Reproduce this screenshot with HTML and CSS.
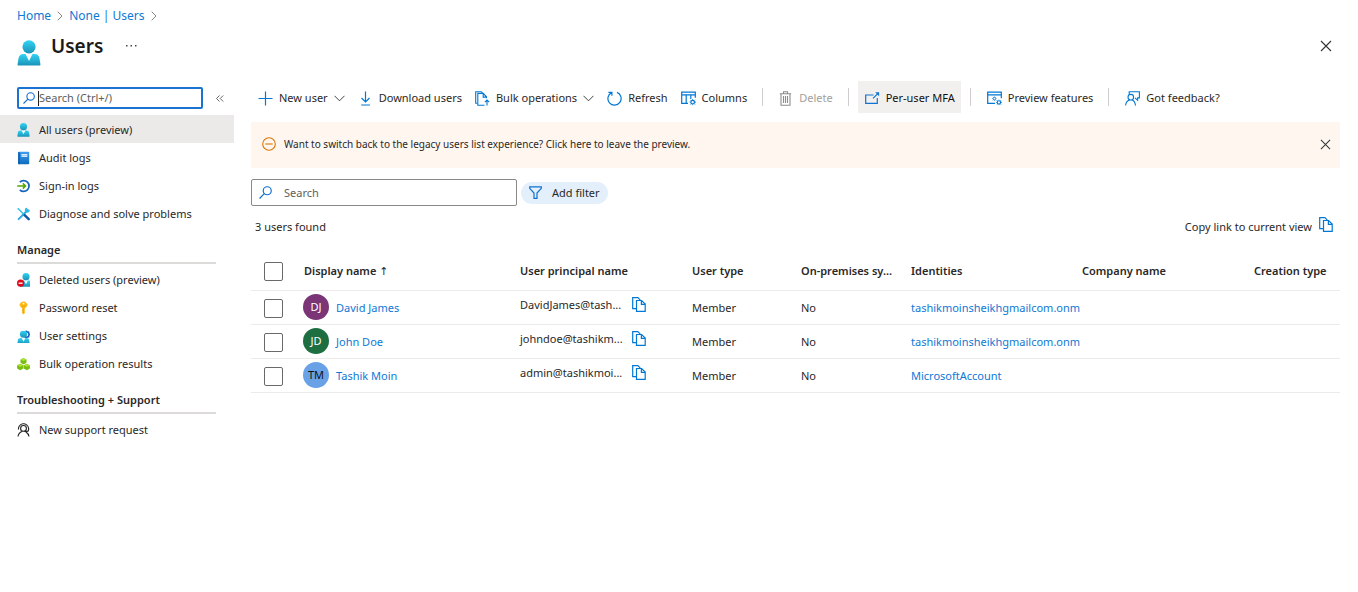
FILE: index.html
```html
<!DOCTYPE html>
<html lang="en">
<head>
<meta charset="utf-8">
<title>Users</title>
<meta name="viewport" content="width=device-width, initial-scale=1">
<link rel="stylesheet" href="styles.css">
</head>
<body>
<svg class="defs" aria-hidden="true">
  <defs>
    <linearGradient id="g-cyan" x1="0" y1="0" x2="0" y2="1"><stop offset="0" stop-color="#32d4f5"/><stop offset="1" stop-color="#1b93b8"/></linearGradient>
    <linearGradient id="g-book" x1="0" y1="0" x2="0" y2="1"><stop offset="0" stop-color="#3f9df0"/><stop offset="1" stop-color="#0f6cbd"/></linearGradient>
    <symbol id="person" viewBox="0 0 24 26">
      <path d="M1.500 25.500C.700 25.500.500 25 .600 24L1.500 18.500c.500-3 2-4.500 5-4.500h11c3 0 4.500 1.500 5 4.500l.9 5.500c.1 1-.1 1.500-.9 1.500z" fill="url(#g-cyan)"/>
      <path d="M8.500 14h7L12 21z" fill="#fff"/>
      <circle cx="12" cy="6.800" r="6.600" fill="url(#g-cyan)"/>
    </symbol>
    <symbol id="chev-right" viewBox="0 0 6 10"><path d="M.7.700 5 5 .7 9.300" fill="none" stroke="#8a8886"/></symbol>
    <symbol id="chev-down" viewBox="0 0 11 7"><path d="M.5.800 5.500 5.800 10.500.800" fill="none" stroke="#444"/></symbol>
    <symbol id="search" viewBox="0 0 12 12"><g fill="none" stroke="#0f6fd0" stroke-width="1.100"><circle cx="7.600" cy="4.400" r="3.700"/><path d="M4.900 7.100.5 11.500"/></g></symbol>
    <symbol id="close" viewBox="0 0 12 12"><path d="M1 1 11 11M11 1 1 11" fill="none" stroke="#333" stroke-width="1.100"/></symbol>
    <symbol id="copy" viewBox="0 0 14 15"><g fill="none" stroke="#0078d4" stroke-width="1.200"><path d="M4.300 11.600H.700V.700h5.200l2.400 2.400"/><path d="M4.500 3.500h5.100l3.600 3.600v7.200H4.500z"/><path d="M9.400 3.700v3.600h3.700"/></g></symbol>
    <symbol id="gear" viewBox="0 0 6 6"><circle cx="3" cy="3" r="1.600" fill="#fff" stroke="#0078d4" stroke-width="1.100"/><path d="M3 0v1M3 5v1M0 3h1M5 3h1M.9.900l.7.700M4.400 4.400l.7.700M.9 5.100l.7-.7M4.400 1.600l.7-.7" stroke="#0078d4" stroke-width=".8"/></symbol>
  </defs>
</svg>

<header class="page-head">
  <nav class="crumbs" aria-label="Breadcrumb">
    <a href="#">Home</a><svg class="crumb-sep"><use href="#chev-right"/></svg>
    <a href="#">None | Users</a><svg class="crumb-sep"><use href="#chev-right"/></svg>
  </nav>
  <div class="title-row">
    <svg class="title-icon"><use href="#person"/></svg>
    <h1>Users</h1>
    <button class="more" type="button" aria-label="More"><svg width="11" height="2" viewBox="0 0 11 2"><path d="M0 0h1.500v1.500H0zM4.500 0H6v1.500H4.500zM9 0h1.500v1.500H9z" fill="#444"/></svg></button>
    <button class="page-close" type="button" aria-label="Close"><svg width="12" height="12"><use href="#close"/></svg></button>
  </div>
</header>

<div class="layout">
  <aside class="sidebar">
    <div class="side-search">
      <label class="field field-focus">
        <svg width="12" height="12"><use href="#search"/></svg>
        <span class="caret"></span>
        <input type="text" placeholder="Search (Ctrl+/)" aria-label="Search menu">
      </label>
      <button class="collapse" type="button" aria-label="Collapse menu"><svg width="8" height="7" viewBox="0 0 8 7"><path d="M3.500.500.500 3.500l3 3M7.200.500l-3 3 3 3" fill="none" stroke="#555" stroke-width=".9"/></svg></button>
    </div>
    <nav>
      <ul class="menu">
        <li><a class="selected" href="#"><svg viewBox="0 0 24 26"><use href="#person"/></svg>All users (preview)</a></li>
        <li><a href="#"><svg viewBox="0 0 13 13"><rect x="1.200" y=".3" width="11" height="12.400" rx=".8" fill="url(#g-book)"/><path d="M1.200.800h1.600v11.900H1.900q-.7 0-.7-.8z" fill="#0b5cad"/><path d="M4.500 2.500h5.800v2.900H4.500z" fill="#e8f3fd"/><path d="M4.500 3.900h5.800" stroke="#6bb3ee" stroke-width=".6"/></svg>Audit logs</a></li>
        <li><a href="#"><svg viewBox="0 0 13 13"><path d="M2.800 2.700A5.400 5.400 0 1 1 2.800 10.300" fill="none" stroke="#1565c0" stroke-width="1.700"/><path d="M.3 6.500h8M5.800 3.900l2.700 2.600-2.700 2.600" fill="none" stroke="#57a300" stroke-width="1.500"/></svg>Sign-in logs</a></li>
        <li><a href="#"><svg viewBox="0 0 13 13"><path d="M1.600 11.700 10.800 2.500" stroke="#2aa9de" stroke-width="1.900" stroke-linecap="round"/><path d="M12.700 2.300a2.500 2.500 0 1 1-2.200-2.100L9.700 1.900l1.100 1.200z" fill="#2bb8e6"/><path d="M.7.700 8 8" stroke="#35c0ee" stroke-width="1.500"/><path d="M7.600 7.600 11.700 11.700" stroke="#0b5aa8" stroke-width="2.400" stroke-linecap="round"/></svg>Diagnose and solve problems</a></li>
      </ul>
      <h2>Manage</h2>
      <ul class="menu">
        <li><a href="#"><svg viewBox="0 0 13 14"><svg x="2.500" y="0" width="10.500" height="12"><use href="#person"/></svg><circle cx="3.600" cy="10.200" r="3.600" fill="#e00b1c"/><path d="M1.600 10.200h4" stroke="#fff" stroke-width="1.300"/></svg>Deleted users (preview)</a></li>
        <li><a href="#"><svg viewBox="0 0 13 14"><path d="M6.500.500Q8 .400 9.200 1.700L10.300 3q.5.700 0 1.500L9 6.500l-1.200.8v5l-1.300 1.200L5.200 12.300v-5L4 6.500 2.700 4.500q-.5-.8 0-1.500L3.800 1.700Q5 .500 6.500.500z" fill="#fdb913"/><circle cx="6.500" cy="2.600" r=".9" fill="#fff"/><path d="M4.700 5.200h3.600M6.100 7.500v4.500" stroke="#e59500" stroke-width=".7"/></svg>Password reset</a></li>
        <li><a href="#"><svg viewBox="0 0 13 13"><circle cx="9.300" cy="5" r="2.700" fill="none" stroke="#1565c0" stroke-width="1.400"/><path d="M9.300.9v1.400M9.300 7.700v1.400M11.900 5h1.100M11.200 3.100l1-1M11.200 6.900l1 1M7.400 3.100l-1-1" stroke="#1565c0" stroke-width="1.300"/><svg x="0" y="1" width="10" height="11"><use href="#person"/></svg></svg>User settings</a></li>
        <li><a href="#"><svg viewBox="0 0 13 13"><path d="M6.500.500 9.500 2v3.300L6.500 6.900 3.500 5.300V2zM3.200 6.200 6.300 7.800V11.100L3.200 12.700.1 11.100V7.800zM9.800 6.200 12.900 7.800V11.100L9.800 12.700 6.700 11.100V7.800z" fill="#78bd10"/><path d="M6.500.700 9.200 2.100 6.500 3.500 3.800 2.100zM3.200 6.400 6 7.900 3.200 9.300.4 7.900zM9.800 6.400 12.600 7.900 9.800 9.300 7 7.900z" fill="#aee632"/></svg>Bulk operation results</a></li>
      </ul>
      <h2>Troubleshooting + Support</h2>
      <ul class="menu">
        <li><a href="#"><svg viewBox="0 0 13 14"><g fill="none" stroke="#222" stroke-width="1.100"><circle cx="6.500" cy="5.400" r="2.900"/><path d="M1.500 6.500A5 5 0 1 1 11.600 5.200v1.500q0 1.700-1.600 1.700H7.500"/><path d="M1 13.500Q1.600 9.500 5 8.400M12 13.500Q11.500 10.500 8.700 8.700"/></g></svg>New support request</a></li>
      </ul>
    </nav>
  </aside>

  <main class="content">
    <div class="toolbar" role="toolbar">
      <button type="button"><svg width="15" height="15" viewBox="0 0 15 15"><path d="M7.500.500v14M.5 7.500h14" stroke="#0078d4" stroke-width="1.200"/></svg>New user<svg width="11" height="7"><use href="#chev-down"/></svg></button>
      <button type="button"><svg width="15" height="15" viewBox="0 0 15 15"><path d="M7.500.500v10.500M3.500 7l4 4 4-4M3.200 14h8.700" fill="none" stroke="#0078d4" stroke-width="1.200"/></svg>Download users</button>
      <button type="button"><svg width="15" height="15" viewBox="0 0 15 15"><g fill="none" stroke="#0078d4" stroke-width="1.100"><path d="M2.300 12.200H.700V.700h5.500l1.700 1.600"/><path d="M9.500 14.300H2.800V2.400h5.400l3.300 3.400v1.400M8.200 2.600v3.500h3.300"/><path d="M12 14.500V9.200M9.900 11.100 12 9l2.200 2.100"/></g></svg>Bulk operations<svg width="11" height="7"><use href="#chev-down"/></svg></button>
      <button type="button"><svg width="15" height="15" viewBox="0 0 15 15"><path d="M4.600 1.600A6.600 6.600 0 1 0 10 1.400M1.400 1.300h3.500v3.500" fill="none" stroke="#0078d4" stroke-width="1.200"/></svg>Refresh</button>
      <button type="button"><svg width="15" height="15" viewBox="0 0 15 15"><g fill="none" stroke="#0078d4" stroke-width="1.200"><path d="M7 12.400H.700V1.100h13.600v5.700M.7 3.900h13.600M5.200 3.900v8.500M9.800 3.900v4"/></g><svg x="8.300" y="7.800" width="6.700" height="6.700"><use href="#gear"/></svg></svg>Columns</button>
      <span class="sep"></span>
      <button type="button" disabled><svg width="14" height="15" viewBox="0 0 14 15"><path d="M.8 2.700h11.400M4.500 2.500V.800h4v1.700M2 2.700v11.600h9V2.700M4.500 5v7M6.500 5v7M8.500 5v7" fill="none" stroke="#8f8d8b" stroke-width="1.100"/></svg>Delete</button>
      <span class="sep"></span>
      <button class="active" type="button"><svg width="15" height="15" viewBox="0 0 15 15"><path d="M8.500 4H.700v8.300h11.600V7M8 7.300l5-5" fill="none" stroke="#1173d0" stroke-width="1.200"/><path d="M10.200 1.300h3.900v3.900z" fill="#1173d0"/></svg>Per-user MFA</button>
      <span class="sep"></span>
      <button type="button"><svg width="15" height="15" viewBox="0 0 15 15"><g fill="none" stroke="#0078d4" stroke-width="1.200"><path d="M8 12.400H.700V1.100h13.600v6.200M.7 3.900h13.600"/></g><svg x="5" y="5.200" width="4.800" height="4.800"><use href="#gear"/></svg><svg x="8.800" y="8.300" width="6.200" height="6.200"><use href="#gear"/></svg></svg>Preview features</button>
      <span class="sep"></span>
      <button type="button"><svg width="15" height="15" viewBox="0 0 15 15"><g fill="none" stroke="#0078d4" stroke-width="1.100"><path d="M4.200 3V.700h10.200v6.200h-1.800v2.400L10 6.900"/><circle cx="5.800" cy="6.200" r="2.800"/><path d="M.6 14.500Q1 10 4.500 8.900M10.500 14.500Q10 10 7.200 8.900"/></g></svg>Got feedback?</button>
    </div>

    <div class="banner">
      <svg width="14" height="14" viewBox="0 0 14 14"><g fill="none" stroke="#db7500" stroke-width="1.100"><circle cx="7" cy="7" r="6.300"/><path d="M3.300 7h7.400"/></g></svg>
      <span>Want to switch back to the legacy users list experience? Click here to leave the preview.</span>
      <button type="button" aria-label="Dismiss"><svg width="11" height="11" viewBox="0 0 12 12"><use href="#close"/></svg></button>
    </div>

    <div class="filters">
      <label class="field field-main">
        <svg width="13" height="13"><use href="#search"/></svg>
        <input type="text" placeholder="Search" aria-label="Search users">
      </label>
      <button class="pill" type="button"><svg width="13" height="13" viewBox="0 0 13 13"><path d="M.7.900h11.600v1.400L8 7v5.300H5V7L.7 2.300z" fill="none" stroke="#0f6fd0" stroke-width="1.200"/></svg>Add filter</button>
    </div>

    <div class="summary">
      <span>3 users found</span>
      <button type="button">Copy link to current view<svg width="14" height="15"><use href="#copy"/></svg></button>
    </div>

    <table class="users">
      <colgroup><col class="c-check"><col class="c-name"><col class="c-upn"><col class="c-type"><col class="c-sync"><col class="c-ident"><col class="c-company"><col></colgroup>
      <thead>
        <tr><th><input type="checkbox" aria-label="Select all"></th><th>Display name <span class="arrow">↑</span></th><th>User principal name</th><th>User type</th><th>On-premises sy...</th><th>Identities</th><th>Company name</th><th>Creation type</th></tr>
      </thead>
      <tbody>
        <tr>
          <td><input type="checkbox" aria-label="Select David James"></td>
          <td><div class="who"><span class="avatar purple">DJ</span><a href="#">David James</a></div></td>
          <td><div class="upn"><span>DavidJames@tash...</span><button type="button" aria-label="Copy"><svg width="14" height="15"><use href="#copy"/></svg></button></div></td>
          <td>Member</td><td>No</td><td><a href="#">tashikmoinsheikhgmailcom.onm</a></td><td></td><td></td>
        </tr>
        <tr>
          <td><input type="checkbox" aria-label="Select John Doe"></td>
          <td><div class="who"><span class="avatar green">JD</span><a href="#">John Doe</a></div></td>
          <td><div class="upn"><span>johndoe@tashikm...</span><button type="button" aria-label="Copy"><svg width="14" height="15"><use href="#copy"/></svg></button></div></td>
          <td>Member</td><td>No</td><td><a href="#">tashikmoinsheikhgmailcom.onm</a></td><td></td><td></td>
        </tr>
        <tr>
          <td><input type="checkbox" aria-label="Select Tashik Moin"></td>
          <td><div class="who"><span class="avatar blue">TM</span><a href="#">Tashik Moin</a></div></td>
          <td><div class="upn"><span>admin@tashikmoi...</span><button type="button" aria-label="Copy"><svg width="14" height="15"><use href="#copy"/></svg></button></div></td>
          <td>Member</td><td>No</td><td><a href="#">MicrosoftAccount</a></td><td></td><td></td>
        </tr>
      </tbody>
    </table>
  </main>
</div>
</body>
</html>
```

FILE: styles.css
```css
* { box-sizing: border-box; }
body {
  margin: 0;
  background: #fff;
  color: #292827;
  font: 11px/16px "Noto Sans", "Open Sans", sans-serif;
}
.defs { position: absolute; width: 0; height: 0; }
svg { display: block; flex: none; }
a { color: #0f78d4; text-decoration: none; }
button {
  display: flex;
  align-items: center;
  padding: 0;
  border: 0;
  background: none;
  color: inherit;
  font: inherit;
  white-space: nowrap;
}
ul { margin: 0; padding: 0; list-style: none; }

.page-head { padding: 8px 26px 0 17px; }
.crumbs { display: flex; align-items: center; gap: 6px; font-size: 12px; }
.crumb-sep { width: 6px; height: 10px; }
.title-row { display: flex; align-items: center; height: 44px; }
.title-icon { width: 24px; height: 26px; margin-top: 14px; }
h1 { margin: 0 0 0 10px; font-size: 19px; line-height: 28px; font-weight: 600; color: #1b1a19; }
.more { margin-left: 23px; }
.page-close { margin-left: auto; }

.layout { display: flex; padding-top: 13px; }
.sidebar { flex: none; width: 234px; }
.content { flex: 1; min-width: 0; padding: 0 18px 0 17px; }

.side-search { display: flex; align-items: center; height: 34px; padding: 0 10px 0 17px; }
.field { display: flex; align-items: center; }
.field input {
  flex: 1;
  min-width: 0;
  padding: 0;
  border: 0;
  outline: 0;
  background: none;
  color: inherit;
  font: inherit;
}
.field input::placeholder { color: #605e5c; opacity: 1; }
.field-focus { width: 186px; height: 22px; padding: 0 4px; border: 2px solid #1a73d0; border-radius: 2px; }
.caret { width: 1px; height: 15px; margin-left: 3px; background: #222; }
.collapse { margin-left: auto; }

.menu a { display: flex; align-items: center; gap: 9px; height: 28px; padding: 2px 0 0 17px; color: #292827; }
.menu svg { width: 13px; height: 14px; }
.menu .selected { background: #ebeae9; }
h2 {
  height: 37px;
  margin: 0 18px 1px 17px;
  padding-top: 15px;
  border-bottom: 2px solid #dcdbda;
  font-size: 11px;
  line-height: 16px;
  font-weight: 600;
}

.toolbar { display: flex; align-items: center; height: 32px; }
.toolbar button { gap: 6px; height: 32px; padding: 2px 6px 0 7px; }
.toolbar button:disabled { color: #a19f9d; }
.toolbar .active { background: #f1f0ef; color: #111; }
.sep { width: 1px; height: 18px; margin: 0 9px; background: #cfcdcb; }

.banner {
  display: flex;
  align-items: center;
  gap: 8px;
  height: 46px;
  margin-top: 9px;
  padding: 0 9px 2px 11px;
  background: #fff6f0;
  font-size: 10px;
}
.banner button { margin-left: auto; }

.filters { display: flex; align-items: center; gap: 4px; margin-top: 11px; }
.field-main { width: 266px; height: 27px; gap: 12px; padding: 0 7px; border: 1px solid #8a8886; border-radius: 2px; }
.pill { gap: 10px; height: 22px; padding: 0 8px; border-radius: 11px; background: #e3f0fb; }

.summary { display: flex; justify-content: space-between; align-items: center; height: 26px; margin-top: 8px; padding: 0 7px 0 4px; }
.summary button { gap: 7px; }
.summary svg { margin-bottom: 5px; }

.users { width: 100%; margin-top: 13px; border-collapse: collapse; table-layout: fixed; }
.c-check { width: 52px; }
.c-name { width: 217px; }
.c-upn { width: 172px; }
.c-type { width: 109px; }
.c-sync { width: 110px; }
.c-ident { width: 171px; }
.c-company { width: 172px; }
.users th, .users td { padding: 0 10px 0 0; border-bottom: 1px solid #edebe9; text-align: left; vertical-align: middle; white-space: nowrap; }
.users th { height: 37px; font-weight: 600; }
.users th:nth-child(2) { padding-left: 1px; }
.users td { height: 34px; padding-top: 2px; }
.users tr > :first-child { padding-left: 13px; }
.arrow { font-family: "DejaVu Sans", sans-serif; font-weight: 400; }
.users input {
  display: block;
  width: 19px;
  height: 19px;
  margin: 0;
  appearance: none;
  border: 1px solid #6b6967;
  border-radius: 2px;
  background: #fff;
}
.who { display: flex; align-items: center; gap: 7px; }
.avatar { width: 26px; height: 26px; margin-bottom: 2px; border-radius: 50%; color: #fff; line-height: 26px; text-align: center; }
.purple { background: #7b3577; }
.green { background: #1d6f42; }
.blue { background: #69a1e6; color: #111; }
.upn { display: flex; align-items: center; gap: 12px; padding-bottom: 7px; }
.upn span { width: 100px; }
```
